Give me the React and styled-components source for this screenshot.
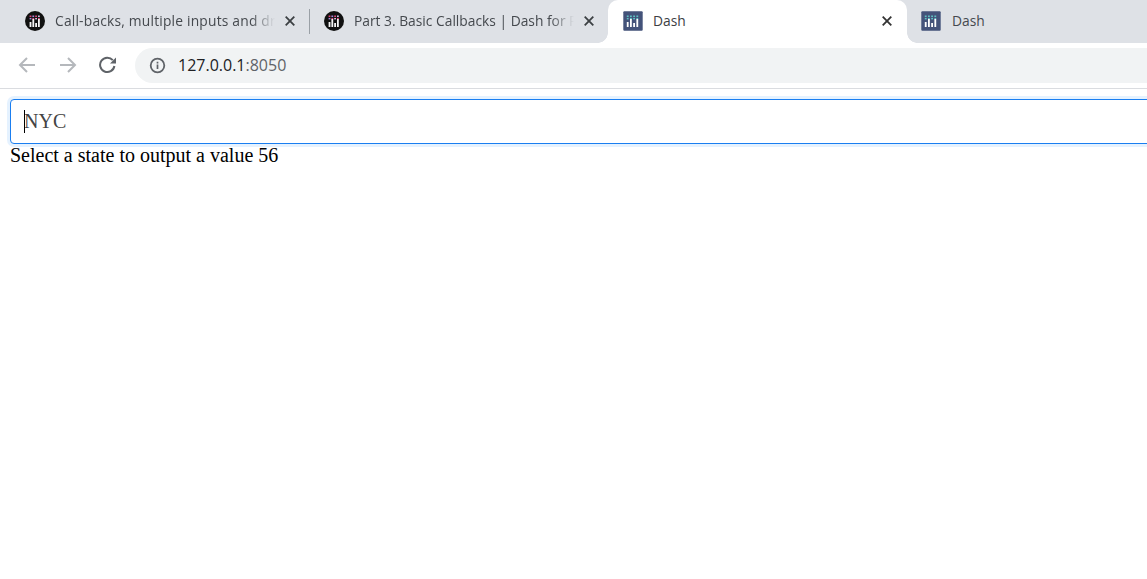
import React from "react";
import styled, { createGlobalStyle } from "styled-components";

const Global = createGlobalStyle`
  html, body { margin: 0; padding: 0; background: #fff; height: 100%; overflow: hidden; }
  #root { height: 100%; }
`;
const Window = styled.div`display:flex;flex-direction:column;width:1147px;height:579px;overflow:hidden;background:#fff;`;
const TabStrip = styled.div`display:flex;align-items:stretch;height:43px;padding-left:10px;background:#dee1e6;flex:none;`;
const Tab = styled.div`
  position:relative;display:flex;align-items:center;box-sizing:border-box;flex:none;
  width:${p=>p.$w}px;height:43px;padding:0 0 2px ${p=>p.$pl ?? 15}px;
  border-radius:${p=>p.$active?"10px 10px 0 0":"0"};
  background:${p=>p.$active?"#fff":"transparent"};
  ${p=>p.$active?`
    &::before,&::after{content:"";position:absolute;bottom:0;width:10px;height:10px;}
    &::before{left:-10px;background:radial-gradient(circle at 0 0,#dee1e6 9.5px,#fff 10px);}
    &::after{right:-10px;background:radial-gradient(circle at 100% 0,#dee1e6 9.5px,#fff 10px);}
  `:""}
`;
const Divider = styled.span`position:absolute;right:0;top:9px;width:1px;height:25px;background:#9aa0a6;`;
const Favicon = styled.svg`width:20px;height:20px;flex:none;display:block;`;
const Title = styled.span`
  display:block;flex:none;width:${p=>p.$w}px;margin-left:${p=>p.$gap ?? 10}px;white-space:nowrap;overflow:hidden;
  font-family:"Open Sans",sans-serif;font-size:13.8px;letter-spacing:${p=>p.$track ?? 0}px;color:${p=>p.$active?"#3c4043":"#45494e"};
  ${p=>p.$fade?`-webkit-mask-image:linear-gradient(to right,#000 calc(100% - 24px),transparent);mask-image:linear-gradient(to right,#000 calc(100% - 24px),transparent);`:""}
`;
const CloseIcon = styled.svg`width:10px;height:10px;flex:none;margin-left:${p=>p.$ml}px;display:block;`;
const Toolbar = styled.div`display:flex;align-items:center;box-sizing:border-box;padding:0 0 1px 17px;border-bottom:1px solid #dadce0;height:46px;flex:none;background:#fff;`;
const NavIcon = styled.svg`width:20px;height:20px;flex:none;margin-right:21px;display:block;`;
const Omnibox = styled.div`display:flex;align-items:center;flex:1;height:35px;margin-left:-5px;margin-right:-20px;padding-left:14px;border-radius:18px;background:#f1f3f4;`;
const InfoIcon = styled.svg`width:17px;height:17px;flex:none;display:block;`;
const Url = styled.span`margin-left:12px;font-family:"Open Sans",sans-serif;font-size:16px;color:#202124;white-space:nowrap;`;
const Port = styled.span`color:#5f6368;`;
const Page = styled.div`flex:1;overflow:hidden;padding:10px 0 0 10px;font-family:"Liberation Serif",serif;font-size:20px;line-height:23px;color:#000;`;
const SelectBox = styled.div`
  position:relative;box-sizing:border-box;display:flex;align-items:center;width:1300px;height:45px;padding-left:13px;
  border:1px solid #1a7ef0;border-radius:4px;box-shadow:0 0 0 3px rgba(0,126,255,.1);color:#444;background:#fff;
`;
const Caret = styled.span`position:absolute;left:13px;top:10px;width:1px;height:23px;background:#000;`;
const Output = styled.div``;

const heights = [5, 8, 4, 8];
const Bars = ({ x, colors, fill, step }) => (
  <g>
    {heights.map((h, i) => (
      <g key={i}>
        <rect x={x + i * step} y="4.5" width="1.8" height="1.6" fill={colors[i]} />
        <rect x={x + i * step} y="7" width="1.8" height="1.4" fill={colors[(i+1)%4]} />
        <rect x={x + i * step} y={16 - h} width="1.8" height={h} fill={fill} />
      </g>
    ))}
  </g>
);
const DarkIcon = () => (
  <Favicon viewBox="0 0 20 20"><circle cx="10" cy="10" r="10" fill="#111" /><Bars x={4.6} step={2.8} colors={["#e0457b","#a58be0","#e0457b","#d0c0e8"]} fill="#f4f4f4" /></Favicon>
);
const DashIcon = () => (
  <Favicon viewBox="0 0 20 20"><rect x="0.3" y="0.3" width="19.4" height="19.4" fill="#44537a" rx="1" /><Bars x={3.8} step={3.2} colors={["#5fc2c4","#5fc2c4","#5fc2c4","#5fc2c4"]} fill="#fff" /></Favicon>
);
const Close = ({ ml, color = "#3c4043" }) => (
  <CloseIcon $ml={ml} viewBox="0 0 10 10"><path d="M.7.7l8.6 8.6M9.3.7L.7 9.3" stroke={color} strokeWidth="1.8" fill="none" /></CloseIcon>
);

export default function App() {
  return (
    <Window>
      <Global />
      <TabStrip>
        <Tab $w={300}><DarkIcon /><Title $w={220} $fade $track={0.2}>Call-backs, multiple inputs and dropdown</Title><Close ml={10} /><Divider /></Tab>
        <Tab $w={298} $pl={14}><DarkIcon /><Title $w={220} $fade>Part 3. Basic Callbacks | Dash for Python</Title><Close ml={10} /></Tab>
        <Tab $w={299} $active><DashIcon /><Title $w={224} $active>Dash</Title><Close ml={5} color="#333" /></Tab>
        <Tab $w={240} $pl={14}><DashIcon /><Title $w={100} $gap={11}>Dash</Title></Tab>
      </TabStrip>
      <Toolbar>
        <NavIcon viewBox="0 0 20 20"><path d="M18 10H3.5M10 3l-7 7 7 7" stroke="#b5b8bc" strokeWidth="2" fill="none" /></NavIcon>
        <NavIcon viewBox="0 0 20 20"><path d="M2 10h14.5M10 3l7 7-7 7" stroke="#b5b8bc" strokeWidth="2" fill="none" /></NavIcon>
        <NavIcon viewBox="0 0 20 20"><path d="M14.8 5.2A7.2 7.2 0 1 0 16.4 11" stroke="#5f6368" strokeWidth="2" fill="none" transform="translate(-1 0)" /><path d="M17 2.5v6h-6z" fill="#5f6368" /></NavIcon>
        <Omnibox>
          <InfoIcon viewBox="0 0 17 17"><circle cx="8.5" cy="8.5" r="6.8" stroke="#5f6368" strokeWidth="1.8" fill="none" /><path d="M8.5 7.6v4.4M8.5 4.7v1.7" stroke="#5f6368" strokeWidth="1.7" /></InfoIcon>
          <Url>127.0.0.1<Port>:8050</Port></Url>
        </Omnibox>
      </Toolbar>
      <Page>
        <SelectBox><Caret />NYC</SelectBox>
        <Output>Select a state to output a value 56</Output>
      </Page>
    </Window>
  );
}
